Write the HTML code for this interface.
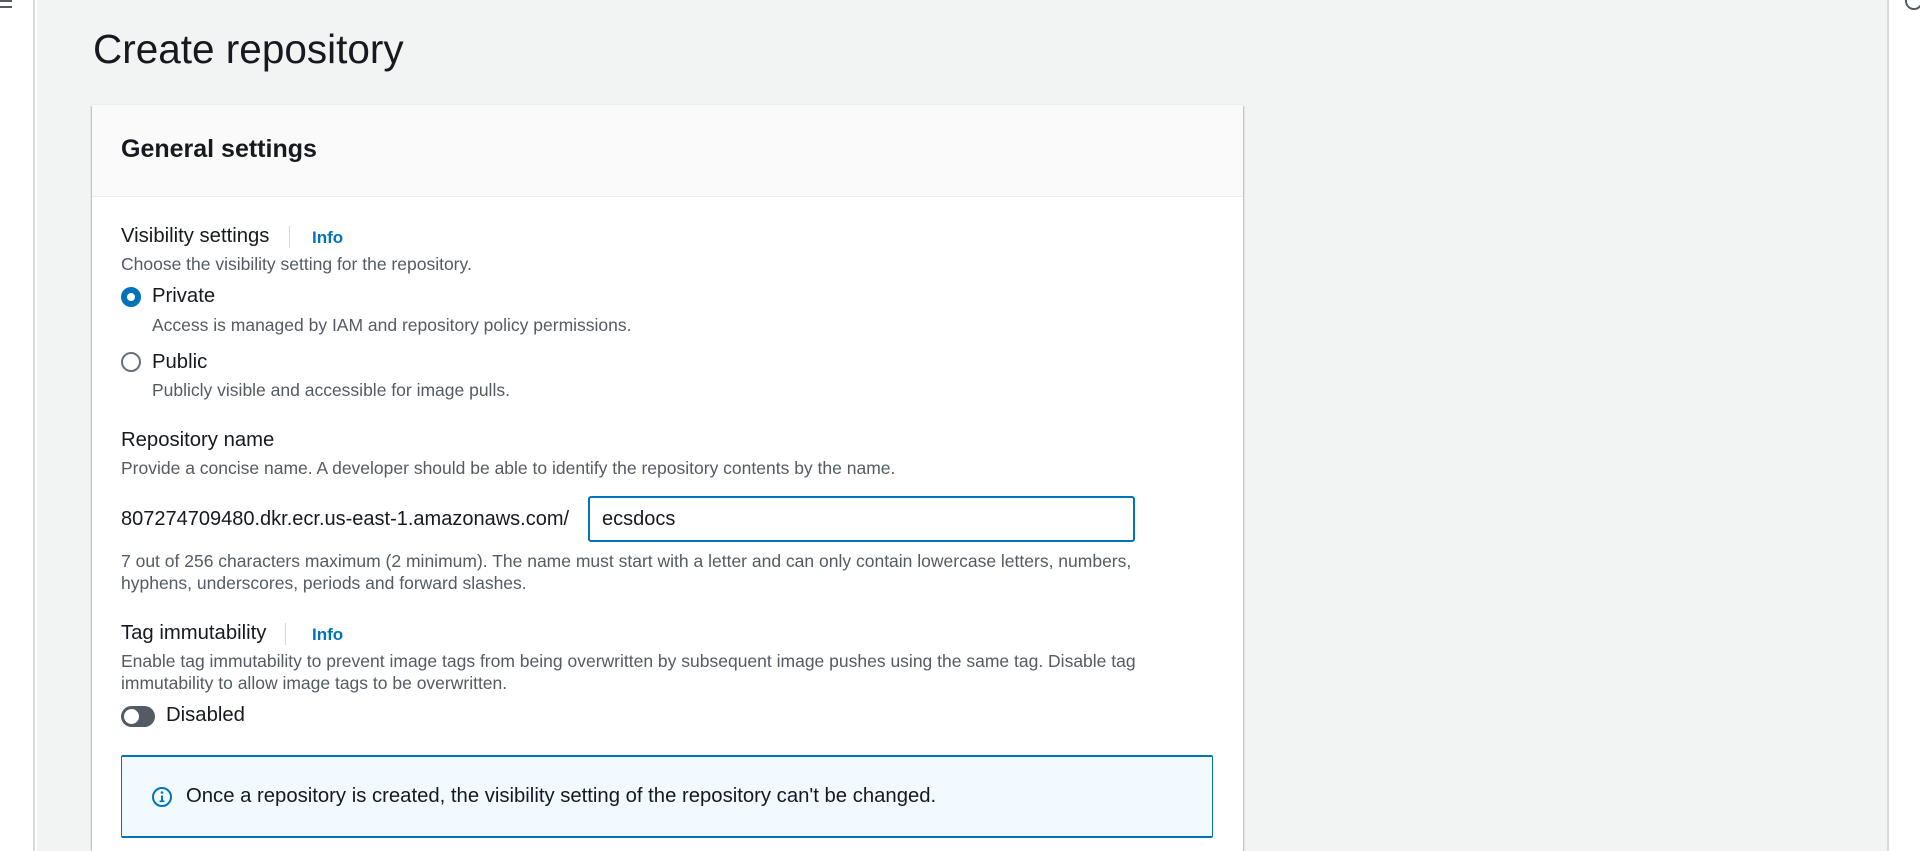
<!DOCTYPE html>
<html style="overflow:hidden"><head><meta charset="utf-8"><style>
*{margin:0;padding:0;box-sizing:border-box}
html,body{width:1920px;height:851px;overflow:hidden}
body{background:#fff;font-family:"Liberation Sans",Arial,sans-serif;color:#16191f;position:relative}
.side{position:absolute;left:0;top:0;width:35px;height:851px;background:#fff;border-right:2px solid #d5dbdb}
.main{position:absolute;left:37px;top:0;width:1850px;height:851px;background:#f2f3f3}
.rp{position:absolute;left:1887px;top:0;width:33px;height:851px;background:#fff;border-left:2px solid #d5dbdb;overflow:hidden}
.abs{position:absolute;white-space:nowrap}
.card{position:absolute;left:92px;top:105px;width:1151px;height:746px;background:#fff;box-shadow:0 1px 2px rgba(0,28,36,.3),1px 1px 1px rgba(0,28,36,.15),-1px 1px 1px rgba(0,28,36,.15)}
.hdr{position:absolute;left:0;top:0;width:100%;height:92px;background:#fafafa;border-bottom:1px solid #eaeded}
.lbl{font-size:20.3px;color:#16191f}
.desc{font-size:17.5px;color:#545b64}
.info{font-size:17px;font-weight:bold;color:#0073bb}
.sep{position:absolute;width:1px;height:22px;background:#d5dbdb}
</style></head><body>
<div class="side"><div style="position:absolute;left:0;top:0;width:12px;height:2px;background:#545b64"></div><div style="position:absolute;left:0;top:6px;width:12px;height:2px;background:#545b64"></div></div>
<div class="main"></div>
<div class="rp"><div style="position:absolute;left:16px;top:-8px;width:18px;height:18px;border:2px solid #545b64;border-radius:50%"></div></div>
<div class="abs" style="left:93px;top:26px;font-size:40.5px;color:#16191f">Create repository</div>
<div class="card"><div class="hdr"></div></div>
<div class="abs" style="left:121px;top:135px;font-size:25px;font-weight:bold">General settings</div>

<div class="abs lbl" style="left:121px;top:225px">Visibility settings</div>
<div class="sep" style="left:289px;top:226px"></div>
<div class="abs info" style="left:312px;top:228px">Info</div>
<div class="abs desc" style="left:121px;top:254px">Choose the visibility setting for the repository.</div>

<div class="abs" style="left:121px;top:287px;width:20px;height:20px;border-radius:50%;border:6px solid #0073bb;background:#fff"></div>
<div class="abs lbl" style="left:152px;top:285px">Private</div>
<div class="abs desc" style="left:152px;top:315px">Access is managed by IAM and repository policy permissions.</div>
<div class="abs" style="left:121px;top:352px;width:20px;height:20px;border-radius:50%;border:2px solid #687078;background:#fff"></div>
<div class="abs lbl" style="left:152px;top:351px">Public</div>
<div class="abs desc" style="left:152px;top:380px">Publicly visible and accessible for image pulls.</div>

<div class="abs lbl" style="left:121px;top:429px">Repository name</div>
<div class="abs desc" style="left:121px;top:458px">Provide a concise name. A developer should be able to identify the repository contents by the name.</div>
<div class="abs" style="left:121px;top:508px;font-size:20px">807274709480.dkr.ecr.us-east-1.amazonaws.com/</div>
<div class="abs" style="left:588px;top:496px;width:547px;height:46px;border:2px solid #0073bb;border-radius:3px;background:#fff"></div>
<div class="abs" style="left:602px;top:508px;font-size:20px">ecsdocs</div>
<div class="abs desc" style="left:121px;top:550px;line-height:22px">7 out of 256 characters maximum (2 minimum). The name must start with a letter and can only contain lowercase letters, numbers,<br>hyphens, underscores, periods and forward slashes.</div>

<div class="abs lbl" style="left:121px;top:622px">Tag immutability</div>
<div class="sep" style="left:285px;top:623px"></div>
<div class="abs info" style="left:312px;top:625px">Info</div>
<div class="abs desc" style="left:121px;top:650px;line-height:22px">Enable tag immutability to prevent image tags from being overwritten by subsequent image pushes using the same tag. Disable tag<br>immutability to allow image tags to be overwritten.</div>
<div class="abs" style="left:121px;top:706px;width:34px;height:21px;border-radius:11px;background:#545b64"></div>
<div class="abs" style="left:124px;top:709px;width:15px;height:15px;border-radius:50%;background:#fff"></div>
<div class="abs lbl" style="left:166px;top:704px">Disabled</div>

<div class="abs" style="left:121px;top:755px;width:1092px;height:83px;background:#f1faff;border:1px solid #0073bb;border-top-width:2px;border-bottom-width:2px;border-radius:2px"></div>
<svg class="abs" style="left:151px;top:786px" width="22" height="22" viewBox="0 0 22 22"><circle cx="11" cy="11" r="9" fill="none" stroke="#0073bb" stroke-width="2"/><rect x="10" y="9.5" width="2" height="6" fill="#0073bb"/><rect x="8.5" y="14.5" width="5" height="1.6" fill="#0073bb"/><circle cx="11" cy="6.5" r="1.3" fill="#0073bb"/></svg>
<div class="abs lbl" style="left:186px;top:785px">Once a repository is created, the visibility setting of the repository can't be changed.</div>
</body></html>
